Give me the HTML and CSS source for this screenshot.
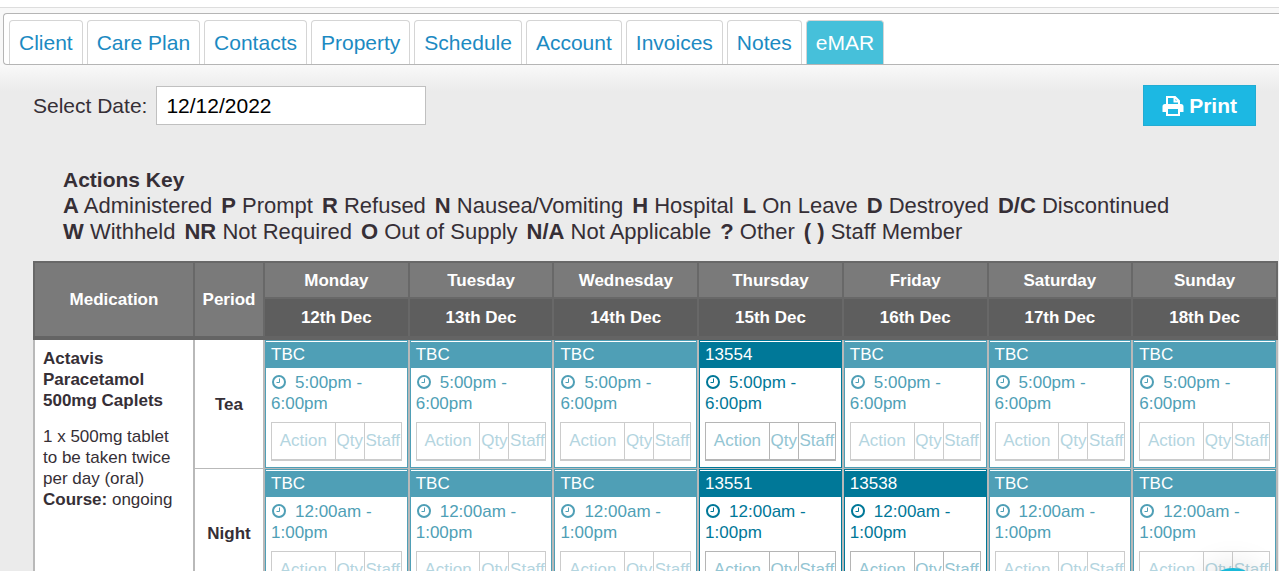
FILE: index.html
```html
<!DOCTYPE html>
<html lang="en">
<head>
  <meta charset="UTF-8" />
  <title>eMAR</title>
  <link rel="stylesheet" href="styles.css">
</head>
<body>

  <svg class="sprite" aria-hidden="true">
    <symbol id="clock" viewBox="0 0 16 16">
      <circle cx="8" cy="8" r="6" fill="none" stroke="currentColor" stroke-width="2" />
      <path d="M8.5 4.5v4h-3" fill="none" stroke="currentColor" stroke-width="1" />
    </symbol>
  </svg>

  <div class="top-strip"></div>

  <header class="tab-bar">
    <nav class="tabs">
      <a href="#client">Client</a>
      <a href="#care-plan">Care Plan</a>
      <a href="#contacts">Contacts</a>
      <a href="#property">Property</a>
      <a href="#schedule">Schedule</a>
      <a href="#account">Account</a>
      <a href="#invoices">Invoices</a>
      <a href="#notes">Notes</a>
      <a href="#emar" class="active">eMAR</a>
    </nav>
  </header>

  <main class="content">
    <div class="toolbar">
      <label for="date">Select Date:</label>
      <input type="text" id="date" value="12/12/2022" />
      <button type="button" class="print-btn">
        <svg width="22" height="20" viewBox="0 0 22 20" aria-hidden="true">
          <path d="M5 9V1h8l4 4v4M12.500 1v4.500H17" fill="none" stroke="currentColor" stroke-width="2" />
          <path d="M3 8h16a2.500 2.500 0 0 1 2.500 2.500V16H17v-3H5v3H.5v-5.500A2.500 2.500 0 0 1 3 8z" fill="currentColor" />
          <path d="M5 13v6h12v-6" fill="none" stroke="currentColor" stroke-width="2" />
        </svg>
        Print
      </button>
    </div>

    <section class="key">
      <h2>Actions Key</h2>
      <ul>
        <li><b>A</b> Administered</li>
        <li><b>P</b> Prompt</li>
        <li><b>R</b> Refused</li>
        <li><b>N</b> Nausea/Vomiting</li>
        <li><b>H</b> Hospital</li>
        <li><b>L</b> On Leave</li>
        <li><b>D</b> Destroyed</li>
        <li><b>D/C</b> Discontinued</li>
        <li><b>W</b> Withheld</li>
        <li><b>NR</b> Not Required</li>
        <li><b>O</b> Out of Supply</li>
        <li><b>N/A</b> Not Applicable</li>
        <li><b>?</b> Other</li>
        <li><b>( )</b> Staff Member</li>
      </ul>
    </section>

    <table class="emar">
      <colgroup>
        <col class="col-med"><col class="col-period">
        <col><col><col><col><col><col><col>
      </colgroup>
      <thead>
        <tr>
          <th rowspan="2">Medication</th>
          <th rowspan="2">Period</th>
          <th>Monday</th>
          <th>Tuesday</th>
          <th>Wednesday</th>
          <th>Thursday</th>
          <th>Friday</th>
          <th>Saturday</th>
          <th>Sunday</th>
        </tr>
        <tr class="dates">
          <th>12th Dec</th>
          <th>13th Dec</th>
          <th>14th Dec</th>
          <th>15th Dec</th>
          <th>16th Dec</th>
          <th>17th Dec</th>
          <th>18th Dec</th>
        </tr>
      </thead>
      <tbody id="rows">
        <tr>
          <td rowspan="2" class="medication">
            <h3>Actavis Paracetamol 500mg Caplets</h3>
            <p>1 x 500mg tablet to be taken twice per day (oral)<br><b>Course:</b> ongoing</p>
          </td>
          <th class="period">Tea</th>
        </tr>
        <tr>
          <th class="period">Night</th>
        </tr>
      </tbody>
    </table>
  </main>

  <button type="button" class="chat-btn" aria-label="Chat"></button>

<script>
  const periods = [
    { from: '5:00pm', to: '6:00pm', visits: ['TBC', 'TBC', 'TBC', '13554', 'TBC', 'TBC', 'TBC'] },
    { from: '12:00am', to: '1:00pm', visits: ['TBC', 'TBC', 'TBC', '13551', '13538', 'TBC', 'TBC'] }
  ];

  document.querySelectorAll('#rows tr').forEach((row, i) => {
    const period = periods[i];
    period.visits.forEach(visit => {
      const cell = document.createElement('td');
      cell.className = visit === 'TBC' ? 'visit' : 'visit booked';
      cell.innerHTML = `
        <div class="card">
          <div class="card-title">${visit}</div>
          <div class="time"><svg class="clock"><use href="#clock"></use></svg>${period.from} - ${period.to}</div>
          <div class="record"><span>Action</span><span>Qty</span><span>Staff</span></div>
        </div>`;
      row.appendChild(cell);
    });
  });
</script>

</body>
</html>
```

FILE: styles.css
```css
* {
  box-sizing: border-box;
}
body {
  margin: 0;
  font-family: "Liberation Sans", Arial, sans-serif;
  font-size: 21px;
  color: #362f36;
  background: #ebebeb;
}
.sprite {
  display: none;
}
.top-strip {
  height: 8px;
  background: #fff;
  border-bottom: 1px solid #ddd;
}
.tab-bar {
  padding: 5px 0 0 3px;
  background: #f8f8f8;
}
.tabs {
  display: flex;
  gap: 4px;
  padding: 6px 5px 0;
  background: #fff;
  border: 1px solid #b5b5b5;
  border-right: none;
  border-radius: 4px 0 0 4px;
}
.tabs a {
  padding: 0 9px;
  line-height: 43px;
  color: #1c8ac2;
  text-decoration: none;
  border: 1px solid #d5d5d5;
  border-bottom: none;
  border-radius: 4px 4px 0 0;
}
.tabs .active {
  color: #fff;
  background: #46c0da;
}
.content {
  padding: 20px 1px 0 33px;
  background: linear-gradient(#f9f9f9, #ebebeb 26px);
}
.toolbar {
  display: flex;
  align-items: center;
  margin-right: 22px;
}
.toolbar input {
  width: 270px;
  height: 39px;
  margin-left: 9px;
  padding: 0 9px;
  font: inherit;
  color: #000;
  background: #fff;
  border: 1px solid #c0c0c0;
}
.print-btn {
  display: flex;
  align-items: center;
  gap: 5px;
  height: 41px;
  margin-left: auto;
  padding: 0 18px;
  font: inherit;
  font-weight: bold;
  color: #fff;
  background: #1cb8e3;
  border: 1px solid #22acd3;
}
.key {
  padding: 41px 30px 0;
  line-height: 26px;
}
.key h2 {
  margin: 0;
  font-size: 21px;
}
.key ul {
  display: flex;
  flex-wrap: wrap;
  column-gap: 9px;
  margin: 0;
  padding: 0;
  font-size: 22px;
  list-style: none;
}
.emar {
  width: 100%;
  margin-top: 16px;
  table-layout: fixed;
  border-collapse: collapse;
  font-size: 17px;
  line-height: 21px;
  background: #fff;
}
.col-med {
  width: 160px;
}
.col-period {
  width: 70px;
}
.emar thead th {
  height: 36px;
  padding: 0;
  color: #fff;
  background: #7a7a7a;
  border: 2px solid #686868;
}
.emar thead .dates th {
  height: 40px;
  background: #5e5e5e;
}
.emar thead {
  border-bottom: 4px solid #646464;
}
.emar tbody td,
.emar tbody th {
  padding: 0;
  border: 2px solid #b9b9b9;
  border-bottom-width: 1px;
  border-top-width: 1px;
}
.emar tbody .medication {
  padding: 8px;
  vertical-align: top;
}
.medication h3 {
  margin: 0 0 15px;
  font-size: 17px;
}
.medication p {
  margin: 0;
}
.visit {
  color: #4f9fb6;
}
.booked {
  color: #007898;
}
.card {
  height: 128px;
  padding-top: 1px;
  border: 1px solid currentColor;
}
.card-title {
  padding: 0 5px;
  line-height: 26px;
  color: #fff;
  background: #4f9fb6;
}
.booked .card-title {
  background: #007898;
}
.time {
  padding: 4px 5px 0;
}
.clock {
  width: 16px;
  height: 16px;
  margin-right: 8px;
  vertical-align: -2px;
}
.record {
  display: flex;
  height: 39px;
  margin: 8px 5px 0;
  line-height: 36px;
  color: #b4d5df;
  border: 1px solid #ccc;
  border-bottom-width: 2px;
}
.booked .record {
  color: #93c5d3;
  border-color: #b5b5b5;
}
.record span {
  width: 29px;
  text-align: center;
}
.record span:first-child {
  flex: 1;
}
.record span:last-child {
  width: 37px;
}
.record span + span {
  border-left: 1px solid #ccc;
}
.booked .record span + span {
  border-color: #b5b5b5;
}
.chat-btn {
  position: fixed;
  right: 16px;
  bottom: -57px;
  width: 60px;
  height: 60px;
  padding: 0;
  background: #19b9d9;
  border: none;
  border-radius: 50%;
  box-shadow: 0 0 32px rgba(0, 0, 0, 0.15);
}
```
